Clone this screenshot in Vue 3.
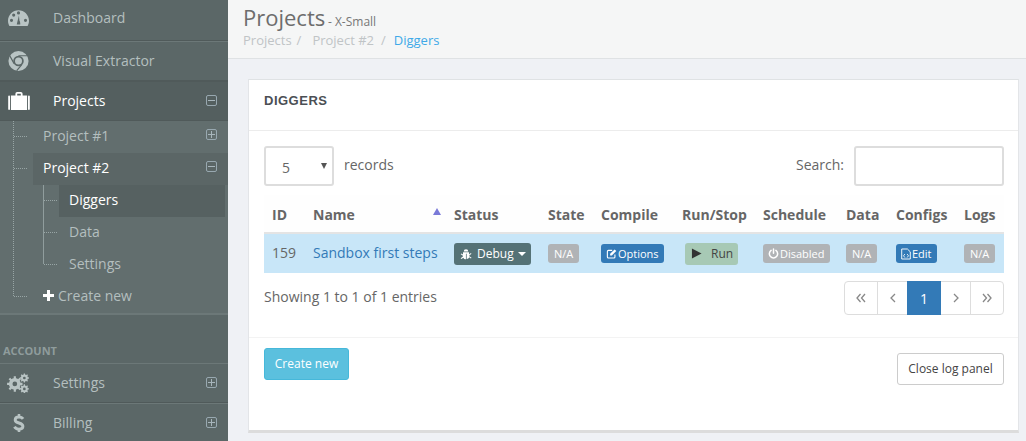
<script setup>
const cols = ['ID','Name','Status','State','Compile','Run/Stop','Schedule','Data','Configs','Logs']
</script>

<template>
  <div class="page">
    <aside class="side">
      <a class="item first">
        <svg class="ic" viewBox="0 0 24 20" width="21" height="18"><path fill="#b9c4c4" fill-rule="evenodd" d="M12 1C5.400 1 0 6.400 0 13c0 2.200.6 4.200 1.600 6h20.800c1-1.800 1.600-3.800 1.600-6C24 6.400 18.600 1 12 1zM4 14.500a1.800 1.800 0 1 1 0-3.600 1.800 1.800 0 0 1 0 3.600zM6.500 8.500a1.800 1.800 0 1 1 0-3.600 1.800 1.800 0 0 1 0 3.600zM12 6a1.800 1.800 0 1 1 0-3.600A1.800 1.800 0 0 1 12 6zM20 14.500a1.800 1.800 0 1 1 0-3.600 1.800 1.800 0 0 1 0 3.600zM14 17.500h-4l1-4.500 1.500-6 .6 6.200c.6.600 1 2.300.9 4.300z"/></svg>
        <span>Dashboard</span>
      </a>
      <a class="item">
        <svg class="ic" viewBox="0 0 24 24" width="21" height="21"><circle cx="12" cy="12" r="11.500" fill="#b9c4c4"/><circle cx="12" cy="12" r="6" fill="#5b6767"/><circle cx="12" cy="12" r="4" fill="#b9c4c4"/><path d="M12 6h10M7 15 2 6M15.500 16.500 10 23" stroke="#5b6767" stroke-width="1.400" fill="none"/></svg>
        <span>Visual Extractor</span>
      </a>
      <a class="item active">
        <svg class="ic" viewBox="0 0 24 20" width="22" height="18"><path fill="#fff" fill-rule="evenodd" d="M3 4h18v16H3zM8 4V2a2 2 0 0 1 2-2h4a2 2 0 0 1 2 2v2h-2V2h-4v2z"/><rect y="4" width="2" height="16" rx="1" fill="#fff"/><rect x="22" y="4" width="2" height="16" rx="1" fill="#fff"/></svg>
        <span>Projects</span>
        <i class="tog minus"></i>
      </a>
      <div class="sub">
        <div class="vdots"></div>
        <a class="row l1"><b class="hd"></b><span>Project #1</span><i class="tog plus"></i></a>
        <a class="row l1 open"><b class="hd"></b><span>Project #2</span><i class="tog minus"></i></a>
        <div class="inner">
          <div class="vline"></div>
          <a class="row l2 cur"><b class="hd"></b><span>Diggers</span></a>
          <a class="row l2"><b class="hd"></b><span>Data</span></a>
          <a class="row l2"><b class="hd"></b><span>Settings</span></a>
        </div>
        <a class="row l1 create"><b class="hd"></b><svg class="cross" viewBox="0 0 11 11" width="11" height="11"><path fill="#fff" d="M4 0h3v4h4v3H7v4H4V7H0V4h4z"/></svg><span>Create new</span></a>
      </div>
      <div class="acct">ACCOUNT</div>
      <a class="item">
        <svg class="ic cogs" viewBox="0 0 24 22" width="22" height="20"><g fill="#b9c4c4"><circle cx="8.500" cy="12" r="6.500"/><circle cx="19" cy="5.500" r="3.800"/><circle cx="19" cy="17.500" r="3.800"/></g><g stroke="#b9c4c4" stroke-width="2.400" fill="none"><path d="M8.500 3.500v17M0 12h17M2.500 6l12 12M14.500 6l-12 12"/></g><g stroke="#b9c4c4" stroke-width="1.400" fill="none"><path d="M19 .5v10M14 5.500h10M15.500 2l7 7M22.500 2l-7 7M19 12.500v10M14 17.500h10M15.500 14l7 7M22.500 14l-7 7"/></g><circle cx="8.500" cy="12" r="2.600" fill="#5b6767"/><circle cx="19" cy="5.500" r="1.500" fill="#5b6767"/><circle cx="19" cy="17.500" r="1.500" fill="#5b6767"/></svg>
        <span>Settings</span>
        <i class="tog plus"></i>
      </a>
      <a class="item">
        <svg class="ic dollar" viewBox="0 0 12 22" width="12" height="20"><path fill="none" stroke="#b9c4c4" stroke-width="3.200" d="M10.500 6.500C9.500 5 8 4.400 6 4.400c-2.600 0-4.200 1.300-4.200 3.200C1.800 12 10.300 10 10.300 14.600c0 2-1.800 3.200-4.300 3.200-2.200 0-4-.8-5-2.600"/><path stroke="#b9c4c4" stroke-width="2.800" d="M6 1v4M6 17v4"/></svg>
        <span>Billing</span>
        <i class="tog plus"></i>
      </a>
    </aside>

    <main class="main">
      <header class="head">
        <h1>Projects <small>- X-Small</small></h1>
        <nav class="crumbs"><span>Projects</span><em>/</em><span>Project #2</span><em>/</em><span class="now">Diggers</span></nav>
      </header>
      <div class="content">
        <section class="card">
          <div class="card-head">DIGGERS</div>
          <div class="card-body">
            <div class="controls">
              <div class="sel"><span>5</span><i class="arrow"></i></div>
              <span class="rec">records</span>
              <span class="search">Search:</span>
              <div class="inp"></div>
            </div>
            <div class="grid thead">
              <div v-for="c in cols" :key="c" class="th">{{ c }}<span v-if="c==='Name'" class="sort"></span></div>
            </div>
            <div class="grid tbody">
              <div class="td txt">159</div>
              <div class="td txt"><a class="link">Sandbox first steps</a></div>
              <div class="td"><span class="btn debug">
                <svg viewBox="0 0 16 16" width="12" height="12"><path fill="#fff" d="M5 4.500a3 3 0 0 1 6 0zM4 5.500h8l.2 3 2.300-1.800.8 1-2.900 2.200v1l3 2.100-.8 1-2.400-1.600c-.6 1.300-1.500 2.100-3.100 2.100h-.2V7.500h-1V15h-.1c-1.600 0-2.600-.8-3.200-2.100L1.700 14.500l-.8-1 3-2.100v-1L1 8.200l.8-1L4 8.500z"/></svg>
                <span class="dbg">Debug</span><i class="caret"></i></span></div>
              <div class="td"><span class="lab na">N/A</span></div>
              <div class="td"><span class="lab blue">
                <svg viewBox="0 0 16 16" width="11" height="11"><path fill="none" stroke="#fff" stroke-width="1.600" d="M13 9.500V13a1.500 1.500 0 0 1-1.500 1.500h-8A1.500 1.500 0 0 1 2 13V5a1.500 1.500 0 0 1 1.500-1.500H9"/><path fill="#fff" d="M6 8.500 12.500 2 15 4.500 8.500 11H6z"/></svg>Options</span></div>
              <div class="td"><span class="btn run"><svg viewBox="0 0 12 12" width="11" height="11"><path fill="#333" d="M1 .5 11.500 6 1 11.500z"/></svg><span>Run</span></span></div>
              <div class="td"><span class="lab na">
                <svg viewBox="0 0 16 16" width="11" height="11"><path fill="none" stroke="#fff" stroke-width="2.200" stroke-linecap="round" d="M4.500 3.500a6 6 0 1 0 7 0M8 1.500v6"/></svg>Disabled</span></div>
              <div class="td"><span class="lab na">N/A</span></div>
              <div class="td"><span class="lab blue">
                <svg viewBox="0 0 14 16" width="10" height="12"><path fill="none" stroke="#fff" stroke-width="1.300" d="M1 1h8l4 4v10H1z"/><path fill="none" stroke="#fff" stroke-width="1.200" d="M5.500 8 3.500 10.500 5.500 13M8.500 8l2 2.500-2 2.500"/></svg>Edit</span></div>
              <div class="td"><span class="lab na">N/A</span></div>
            </div>
            <div class="foot">
              <span class="info">Showing 1 to 1 of 1 entries</span>
              <ul class="pager">
                <li><svg viewBox="0 0 10 10" width="10" height="10"><path d="M4.500 1 1 5l3.500 4M9 1 5.500 5 9 9" fill="none" stroke="#888" stroke-width="1.300"/></svg></li>
                <li class="nar"><svg viewBox="0 0 6 10" width="6" height="10"><path d="M5 1 1 5l4 4" fill="none" stroke="#888" stroke-width="1.300"/></svg></li>
                <li class="on">1</li>
                <li class="nar"><svg viewBox="0 0 6 10" width="6" height="10"><path d="m1 1 4 4-4 4" fill="none" stroke="#888" stroke-width="1.300"/></svg></li>
                <li><svg viewBox="0 0 10 10" width="10" height="10"><path d="M1 1l3.500 4L1 9M5.500 1 9 5 5.500 9" fill="none" stroke="#888" stroke-width="1.300"/></svg></li>
              </ul>
            </div>
            <div class="actions">
              <button class="create-btn">Create new</button>
              <button class="close-btn">Close log panel</button>
            </div>
          </div>
        </section>
      </div>
    </main>
  </div>
</template>

<style>
html, body { margin: 0; overflow: hidden; }
</style>

<style scoped>
.page { display: flex; width: 1026px; height: 441px; overflow: hidden; font-family: "Open Sans", sans-serif; font-size: 14px; color: #666; }
.side { width: 228px; flex: none; background: #5b6767; color: #b4bfbf; }
.item { display: flex; align-items: center; box-sizing: border-box; height: 40px; padding: 0 11px 1px 0; border-top: 1px solid #6c7878; border-bottom: 1px solid #505a5a; position: relative; }
.item.first { height: 41px; border-top: 0; padding-bottom: 5px; }
.item .ic { position: absolute; left: 8px; top: 50%; transform: translateY(-50%); }
.item.first .ic { top: 9px; transform: none; }
.item .dollar { left: 13px; }
.item .cogs { left: 7px; }
.item span { margin-left: 53px; flex: 1; }
.item.active { background: #545f5f; color: #fff; border-top-color: #505a5a; }
.tog { width: 9px; height: 9px; border: 1px solid #98a8b0; border-radius: 2px; position: relative; display: block; flex: none; }
.tog::before { content: ""; position: absolute; left: 1px; right: 1px; top: 4px; height: 1px; background: #a8b6bc; }
.tog.plus::after { content: ""; position: absolute; top: 1px; bottom: 1px; left: 4px; width: 1px; background: #a8b6bc; }
.sub { background: #626e6e; position: relative; border-bottom: 2px solid #6c7878; }
.vdots { position: absolute; left: 13px; top: 0; height: 175px; border-left: 1px dotted #98a5a5; }
.row { display: flex; align-items: center; box-sizing: border-box; height: 32px; position: relative; padding: 0 11px 4px 0; }
.hd { position: absolute; top: 15px; width: 13px; border-top: 1px dotted #98a5a5; }
.l1 { padding-left: 43px; }
.l1 span { flex: 1; }
.l1 .hd { left: 14px; }
.l1 .tog { margin-top: -2px; }
.open { margin-left: 33px; padding-left: 10px; background: #5b6666; color: #fff; }
.open .hd { left: -19px; }
.inner { position: relative; }
.vline { position: absolute; left: 43px; top: 0; height: 79px; border-left: 1px solid #909d9d; }
.l2 { padding-left: 69px; }
.l2 .hd { left: 44px; }
.cur { margin-left: 59px; margin-right: 3px; padding-left: 10px; background: #566161; color: #fff; }
.cur .hd { left: -15px; }
.cross { margin-right: 4px; flex: none; }
.acct { height: 48px; box-sizing: border-box; padding: 28px 0 0 3px; font-size: 11px; font-weight: 700; color: #8f9c9c; line-height: 15px; }

.main { flex: 1; background: #eff1f5; display: flex; flex-direction: column; }
.head { box-sizing: border-box; background: #f5f6f6; border-bottom: 1px solid #dfe2e4; padding: 2px 15px 0; height: 59px; }
h1 { margin: 0; font-size: 22px; font-weight: 400; line-height: 30px; color: #6d6d6d; }
h1 small { font-size: 12px; color: #777; margin-left: -3px; }
.crumbs { display: flex; font-size: 13px; line-height: 18px; color: #c0c4c6; margin-top: -6px; }
.crumbs em { font-style: normal; margin: 0 11px 0 5px; }
.crumbs em:nth-of-type(2) { margin: 0 8px 0 7px; }
.now { color: #3fa9e8; }
.content { padding: 20px 7px 0 20px; }
.card { background: #fff; height: 354px; box-sizing: border-box; border: 1px solid #e3e5e8; border-bottom: 3px solid #dcdcdc; border-top-color: #dfe2e4; }
.card-head { height: 51px; box-sizing: border-box; padding: 0 15px; line-height: 42px; font-size: 13px; font-weight: 700; color: #4b4f54; border-bottom: 1px solid #ececec; font-family: "Liberation Sans", sans-serif; letter-spacing: .5px; }
.card-body { padding: 15px 14px 0 15px; }
.controls { display: flex; align-items: center; height: 40px; color: #666; }
.sel { width: 70px; height: 40px; box-sizing: border-box; border: 2px solid #ddd; border-radius: 3px; display: flex; align-items: center; justify-content: space-between; padding: 2px 5px 0 16px; }
.arrow { border-top: 6px solid #555; border-left: 3.500px solid transparent; border-right: 3.500px solid transparent; margin-top: -3px; }
.rec { margin-left: 10px; margin-top: -3px; flex: 1; }
.search { margin-right: 10px; margin-top: -3px; }
.inp { width: 150px; height: 40px; box-sizing: border-box; border: 2px solid #ddd; border-radius: 3px; }
.grid { display: grid; grid-template-columns: 41px 141px 94px 53px 81px 81px 83px 50px 68px 48px; width: 740px; }
.thead { margin-top: 9px; height: 39px; box-sizing: border-box; border-bottom: 2px solid #e4e4e4; background: #fefefe; }
.th { padding: 0 0 0 8px; font-weight: 700; line-height: 40px; white-space: nowrap; position: relative; font-size: 14px; }
.sort { position: absolute; right: 5px; top: 13px; width: 0; height: 0; border: 4px solid transparent; border-top: 0; border-bottom: 7px solid #7a7ad8; }
.tbody { height: 39px; background: #c8e6f8; align-items: center; }
.td { padding-left: 8px; white-space: nowrap; display: flex; align-items: center; }
.txt { margin-top: -2px; }
.link { color: #337ab7; }
.btn { display: inline-flex; align-items: center; height: 22px; border-radius: 3px; font-size: 12px; box-sizing: border-box; }
.debug { background: #557276; color: #fff; width: 77px; padding-left: 6px; }
.dbg { margin-left: 5px; }
.caret { margin-left: 4px; border-top: 4px solid #fff; border-left: 4px solid transparent; border-right: 4px solid transparent; }
.run { background: #a7c9b5; color: #444; width: 53px; margin-left: 3px; padding-left: 6px; }
.run span { margin-left: 9px; }
.lab { display: inline-flex; align-items: center; height: 19px; border-radius: 3px; font-size: 11px; color: #fff; padding: 0 5px; box-sizing: border-box; gap: 1px; }
.na { background: #b0b3b6; }
.na:not(:has(svg)) { padding: 0 6px; }
.blue { background: #337ab7; }
.foot { display: flex; justify-content: space-between; align-items: center; margin-top: 8px; height: 34px; }
.info { margin-top: -4px; }
.pager { list-style: none; margin: 0; padding: 0; display: flex; height: 34px; border: 1px solid #ddd; border-radius: 4px; box-sizing: border-box; }
.pager li { width: 33px; box-sizing: border-box; display: flex; align-items: center; justify-content: center; border-left: 1px solid #ddd; font-size: 14px; }
.pager li:first-child { border-left: 0; width: 32px; }
.pager .nar { width: 30px; }
.pager .on { background: #337ab7; color: #fff; border: 0; width: 34px; margin: -1px 0; }
.pager .on + li { border-left: 0; width: 29px; }
.actions { display: flex; justify-content: space-between; align-items: flex-start; margin: 22px -14px 0 -15px; padding: 10px 14px 0 15px; border-top: 1px solid #f3f3f3; }
button { font-family: inherit; font-size: 12px; border-radius: 3px; cursor: pointer; box-sizing: border-box; }
.create-btn { width: 85px; height: 32px; background: #5bc0de; border: 1px solid #46b8da; color: #fff; padding-bottom: 3px; }
.close-btn { width: 107px; height: 32px; margin-top: 5px; background: #fff; border: 1px solid #ccc; color: #444; padding-bottom: 3px; }
</style>
